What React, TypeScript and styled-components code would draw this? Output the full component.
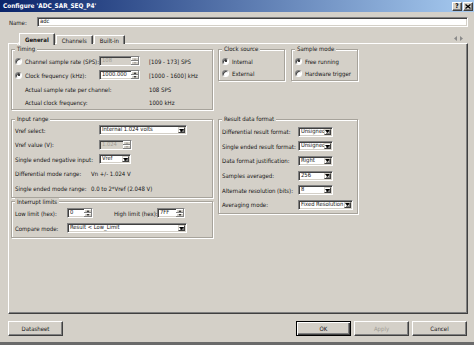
import React from 'react';
import styled, { createGlobalStyle, css } from 'styled-components';

const FACE = '#d4d0c8';
const SHADOW = '#808080';
const DARK = '#404040';
const LIGHT = '#ffffff';
const INK = '#151515';

const Global = createGlobalStyle`
  html, body { margin: 0; padding: 0; background: ${FACE}; }
  body {
    width: 474px; height: 345px; overflow: hidden;
    font-family: "DejaVu Sans Condensed", "Liberation Sans", sans-serif;
    font-size: 6px; color: ${INK};
  }
  * { box-sizing: border-box; }
`;

const Window = styled.div`
  width: 474px; height: 345px;
  display: flex; flex-direction: column;
  background: ${FACE};
`;

const TitleBar = styled.div`
  height: 12px; flex: none;
  display: flex; align-items: center;
  padding: 0 1px 0 3px;
  background: linear-gradient(to right, #0a246a, #a6caf0);
  color: #fff; font-weight: bold; font-size: 6.4px;
`;
const TitleText = styled.span`
  flex: 1;
  white-space: nowrap;
`;
const CaptionButton = styled.div`
  width: 10px; height: 9px; margin-left: 1px;
  background: ${FACE}; color: #000;
  display: flex; align-items: center; justify-content: center;
  border: 1px solid; border-color: ${LIGHT} ${DARK} ${DARK} ${LIGHT};
  box-shadow: inset -1px -1px 0 ${SHADOW};
  font-size: 6.5px; font-weight: bold; line-height: 1;
`;

const Body = styled.div`
  flex: 1;
  display: flex; flex-direction: column;
  padding: 0 6px 0 8px;
`;

const NameRow = styled.div`
  display: flex; align-items: center;
  height: 10px; margin-top: 5px;
`;
const NameLabel = styled.span`
  width: 29px; padding-left: 1px; flex: none;
`;

const sunken = css`
  border: 1px solid;
  border-color: ${SHADOW} ${LIGHT} ${LIGHT} ${SHADOW};
  box-shadow: inset 1px 1px 0 ${DARK}, inset -1px -1px 0 ${FACE};
`;
const raised = css`
  background: ${FACE};
  border: 1px solid;
  border-color: ${FACE} ${DARK} ${DARK} ${FACE};
  box-shadow: inset 1px 1px 0 ${LIGHT}, inset -1px -1px 0 ${SHADOW};
`;

const Field = styled.div<{ $w?: number; $disabled?: boolean }>`
  ${sunken}
  width: ${p => (p.$w ? `${p.$w}px` : 'auto')};
  flex: ${p => (p.$w ? 'none' : '1')};
  height: 10px;
  background: ${p => (p.$disabled ? FACE : '#fff')};
  color: ${p => (p.$disabled ? '#a09c94' : INK)};
  display: flex; align-items: center;
  padding: 1px 1px 1px 2px;
  line-height: 1;
  font-size: 5.8px;
`;
const FieldText = styled.span`
  flex: 1; min-width: 0;
  overflow: hidden; white-space: nowrap;
`;
const DropButton = styled.span`
  ${raised}
  width: 7px; height: 100%; flex: none;
  display: flex; align-items: center; justify-content: center;
`;
const SpinButton = styled.span`
  width: 8px; height: 8px; flex: none; margin-right: -1px;
  display: block;
`;

const DownArrow = () => (
  <svg width="5" height="3" viewBox="0 0 5 3">
    <path d="M0 0h5L2.5 3z" fill="#000" />
  </svg>
);

const Spinner = ({ disabled }: { disabled?: boolean }) => {
  const a = disabled ? '#a09c94' : '#000';
  return (
    <SpinButton>
      <svg width="8" height="8" viewBox="0 0 8 8">
        <rect x="0" y="0" width="8" height="8" fill={FACE} />
        <path d="M0 0.5h7.5M0.5 0v3.5M0 4.5h7.5M0.5 4v3.5" stroke="#fff" strokeWidth="1" />
        <path d="M7.5 0v4M0 3.5h8M7.5 4v4M0 7.5h8" stroke={SHADOW} strokeWidth="1" />
        <path d="M2.5 2.7h3L4 1.2z" fill={a} />
        <path d="M2.5 5.3h3L4 6.8z" fill={a} />
      </svg>
    </SpinButton>
  );
};

const Select = ({ w, value }: { w: number; value: string }) => (
  <Field $w={w}>
    <FieldText>{value}</FieldText>
    <DropButton>
      <DownArrow />
    </DropButton>
  </Field>
);

const SpinField = ({ w, value, disabled }: { w: number; value: string; disabled?: boolean }) => (
  <Field $w={w} $disabled={disabled}>
    <FieldText>{value}</FieldText>
    <Spinner disabled={disabled} />
  </Field>
);

const TabStrip = styled.div`
  display: flex; align-items: flex-end; gap: 1px;
  height: 11px; margin-top: 6px;
  padding-left: 11px;
  position: relative; z-index: 2;
`;
const Tab = styled.div<{ $active?: boolean }>`
  position: relative;
  height: ${p => (p.$active ? 12 : 9)}px;
  margin-bottom: ${p => (p.$active ? -1 : 0)}px;
  padding: 0 5px;
  background: ${FACE};
  border: 1px solid;
  border-bottom: none;
  border-color: ${LIGHT} ${DARK} transparent ${LIGHT};
  box-shadow: inset -1px 0 0 ${SHADOW};
  display: flex; align-items: center;
  font-weight: ${p => (p.$active ? 'bold' : 'normal')};
  white-space: nowrap;
  ${p =>
    p.$active &&
    css`
      &::before {
        content: '';
        position: absolute;
        left: -3px; top: -1px; bottom: 0; width: 6px;
        background: ${FACE};
        border-left: 1px solid ${LIGHT};
        border-top: 1px solid ${LIGHT};
        transform: skewX(-30deg);
        transform-origin: bottom left;
        z-index: -1;
      }
    `}
`;
const TabArrows = styled.div`
  margin-left: auto; margin-right: 5px;
  align-self: center;
  display: flex; gap: 3px;
`;

const Panel = styled.div`
  height: 271px; margin-top: -1px;
  border: 1px solid;
  border-color: ${LIGHT} ${DARK} ${DARK} ${LIGHT};
  box-shadow: inset -1px -1px 0 ${SHADOW};
  padding: 1px 2px;
  position: relative; z-index: 1;
`;

const Columns = styled.div`
  display: grid;
  grid-template-columns: 202px 140px;
  column-gap: 5px;
  grid-template-areas:
    "timing top"
    "input result"
    "intr result";
  align-items: start;
  align-content: start;
`;

const Group = styled.fieldset<{ $area: string; $mt?: number; $w?: number }>`
  grid-area: ${p => p.$area};
  margin: ${p => p.$mt ?? 0}px 0 0 0;
  width: ${p => (p.$w ? `${p.$w}px` : 'auto')};
  padding: 0 3px 1px 3px;
  min-width: 0;
  border: 1px solid #a7a39b;
  box-shadow: inset 1px 1px 0 ${LIGHT}, 1px 1px 0 ${LIGHT};
`;
const Legend = styled.legend`
  padding: 0 2px;
  height: 8px; line-height: 8px;
  background: ${FACE};
  font-size: 6px;
`;

const TopRow = styled.div`
  grid-area: top;
  display: flex; gap: 6px;
`;

const TimingGrid = styled.div`
  display: grid;
  padding-top: 1px;
  grid-template-columns: 84px 41px 1fr;
  grid-template-rows: 14px 14px 14px 12px;
  align-items: center;
`;
const RadioLabel = styled.label`
  display: flex; align-items: center; white-space: nowrap;
`;
const RadioCircle = styled.span<{ $checked?: boolean }>`
  position: relative;
  width: 7px; height: 7px; flex: none;
  margin-right: 3px;
  border-radius: 50%;
  border: 1px solid;
  border-color: ${SHADOW} ${LIGHT} ${LIGHT} ${SHADOW};
  background: #fff;
  box-shadow: inset 1px 1px 0 ${DARK};
  ${p =>
    p.$checked &&
    css`
      &::after {
        content: '';
        position: absolute;
        left: 1.5px; top: 1.5px; width: 2px; height: 2px;
        border-radius: 50%;
        background: #000;
      }
    `}
`;
const InfoLabel = styled.span`
  grid-column: 1 / 3;
  padding-left: 10px;
  white-space: nowrap;
`;
const InfoValue = styled.span`
  padding-left: 9px;
  white-space: nowrap;
`;

const Row = styled.div<{ $h: number }>`
  display: flex; align-items: center;
  height: ${p => p.$h}px;
  white-space: nowrap;
`;
const RowLabel = styled.span<{ $w: number; $ml?: number }>`
  width: ${p => p.$w}px; flex: none;
  margin-left: ${p => p.$ml ?? 0}px;
  white-space: nowrap;
`;
const Stack = styled.div<{ $pt?: number }>`
  padding-top: ${p => p.$pt ?? 0}px;
`;

const ButtonRow = styled.div`
  display: flex; gap: 3px;
  margin-top: 7px;
  padding-right: 1px;
`;
const Spacer = styled.div`flex: 1;`;
const PushButton = styled.button<{ $default?: boolean }>`
  width: 55px; height: 15px; padding: 0;
  font-family: inherit; font-size: 6px;
  color: ${p => (p.disabled ? '#a09c94' : INK)};
  background: ${FACE};
  border: 1px solid;
  border-color: ${LIGHT} ${DARK} ${DARK} ${LIGHT};
  box-shadow: inset -1px -1px 0 ${SHADOW};
  ${p =>
    p.$default &&
    css`
      border-color: #000;
      box-shadow: inset 1px 1px 0 ${LIGHT}, inset -1px -1px 0 ${DARK}, inset -2px -2px 0 ${SHADOW};
    `}
`;
const BottomEdge = styled.div`
  height: 3px; flex: none;
  background: #6a6a6a;
`;

const Radio = ({ checked, children }: { checked?: boolean; children: React.ReactNode }) => (
  <RadioLabel>
    <RadioCircle $checked={checked} />
    {children}
  </RadioLabel>
);

export default function App() {
  return (
    <>
      <Global />
      <Window>
        <TitleBar>
          <TitleText>Configure 'ADC_SAR_SEQ_P4'</TitleText>
          <CaptionButton>?</CaptionButton>
          <CaptionButton>
            <svg width="6" height="5" viewBox="0 0 6 5">
              <path d="M0.5 0.5l5 4M5.5 0.5l-5 4" stroke="#000" strokeWidth="1.3" />
            </svg>
          </CaptionButton>
        </TitleBar>
        <Body>
          <NameRow>
            <NameLabel>Name:</NameLabel>
            <Field>
              <FieldText>adc</FieldText>
            </Field>
          </NameRow>

          <TabStrip>
            <Tab $active>General</Tab>
            <Tab>Channels</Tab>
            <Tab>Built-in</Tab>
            <TabArrows>
              <svg width="3" height="5" viewBox="0 0 3 5">
                <path d="M3 0v5L0 2.5z" fill="#8a8a8a" />
              </svg>
              <svg width="3" height="5" viewBox="0 0 3 5">
                <path d="M0 0v5L3 2.5z" fill="#8a8a8a" />
              </svg>
            </TabArrows>
          </TabStrip>

          <Panel>
            <Columns>
              <Group $area="timing">
                <Legend>Timing</Legend>
                <TimingGrid>
                  <Radio>Channel sample rate (SPS):</Radio>
                  <SpinField w={41} value="108" disabled />
                  <InfoValue>[109 - 173] SPS</InfoValue>
                  <Radio checked>Clock frequency (kHz):</Radio>
                  <SpinField w={41} value="1000.000" />
                  <InfoValue>[1000 - 1600] kHz</InfoValue>
                  <InfoLabel>Actual sample rate per channel:</InfoLabel>
                  <InfoValue>108 SPS</InfoValue>
                  <InfoLabel>Actual clock frequency:</InfoLabel>
                  <InfoValue>1000 kHz</InfoValue>
                </TimingGrid>
              </Group>

              <TopRow>
                <Group $area="auto" $w={67}>
                  <Legend>Clock source</Legend>
                  <Stack $pt={2}>
                    <Row $h={12}>
                      <Radio checked>Internal</Radio>
                    </Row>
                    <Row $h={12}>
                      <Radio>External</Radio>
                    </Row>
                  </Stack>
                </Group>
                <Group $area="auto" $w={67}>
                  <Legend>Sample mode</Legend>
                  <Stack $pt={2}>
                    <Row $h={12}>
                      <Radio checked>Free running</Radio>
                    </Row>
                    <Row $h={12}>
                      <Radio>Hardware trigger</Radio>
                    </Row>
                  </Stack>
                </Group>
              </TopRow>

              <Group $area="input" $mt={5}>
                <Legend>Input range</Legend>
                <Row $h={14.5}>
                  <RowLabel $w={84}>Vref select:</RowLabel>
                  <Select w={88} value="Internal 1.024 volts" />
                </Row>
                <Row $h={14.5}>
                  <RowLabel $w={84}>Vref value (V):</RowLabel>
                  <SpinField w={33} value="1.024" disabled />
                </Row>
                <Row $h={14.5}>
                  <RowLabel $w={84}>Single ended negative input:</RowLabel>
                  <Select w={32} value="Vref" />
                </Row>
                <Row $h={14.5}>
                  <RowLabel $w={76}>Differential mode range:</RowLabel>
                  <span>Vn +/- 1.024 V</span>
                </Row>
                <Row $h={14.5}>
                  <RowLabel $w={76}>Single ended mode range:</RowLabel>
                  <span>0.0 to 2*Vref (2.048 V)</span>
                </Row>
              </Group>

              <Group $area="result" $mt={5}>
                <Legend>Result data format</Legend>
                <Stack $pt={1.5}>
                  <Row $h={14.6}>
                    <RowLabel $w={76}>Differential result format:</RowLabel>
                    <Select w={35} value="Unsigned" />
                  </Row>
                  <Row $h={14.6}>
                    <RowLabel $w={76}>Single ended result format:</RowLabel>
                    <Select w={35} value="Unsigned" />
                  </Row>
                  <Row $h={14.6}>
                    <RowLabel $w={76}>Data format justification:</RowLabel>
                    <Select w={35} value="Right" />
                  </Row>
                  <Row $h={14.6}>
                    <RowLabel $w={76}>Samples averaged:</RowLabel>
                    <Select w={35} value="256" />
                  </Row>
                  <Row $h={14.6}>
                    <RowLabel $w={76}>Alternate resolution (bits):</RowLabel>
                    <Select w={35} value="8" />
                  </Row>
                  <Row $h={14.6}>
                    <RowLabel $w={76}>Averaging mode:</RowLabel>
                    <Select w={55} value="Fixed Resolution" />
                  </Row>
                </Stack>
              </Group>

              <Group $area="intr" $mt={0}>
                <Legend>Interrupt limits</Legend>
                <Row $h={15}>
                  <RowLabel $w={52}>Low limit (hex):</RowLabel>
                  <SpinField w={26} value="0" />
                  <RowLabel $w={43} $ml={21}>High limit (hex):</RowLabel>
                  <SpinField w={28} value="7FF" />
                </Row>
                <Row $h={15}>
                  <RowLabel $w={52}>Compare mode:</RowLabel>
                  <Select w={120} value="Result < Low_Limit" />
                </Row>
              </Group>
            </Columns>
          </Panel>

          <ButtonRow>
            <PushButton>Datasheet</PushButton>
            <Spacer />
            <PushButton $default>OK</PushButton>
            <PushButton disabled>Apply</PushButton>
            <PushButton>Cancel</PushButton>
          </ButtonRow>
        </Body>
        <BottomEdge />
      </Window>
    </>
  );
}
